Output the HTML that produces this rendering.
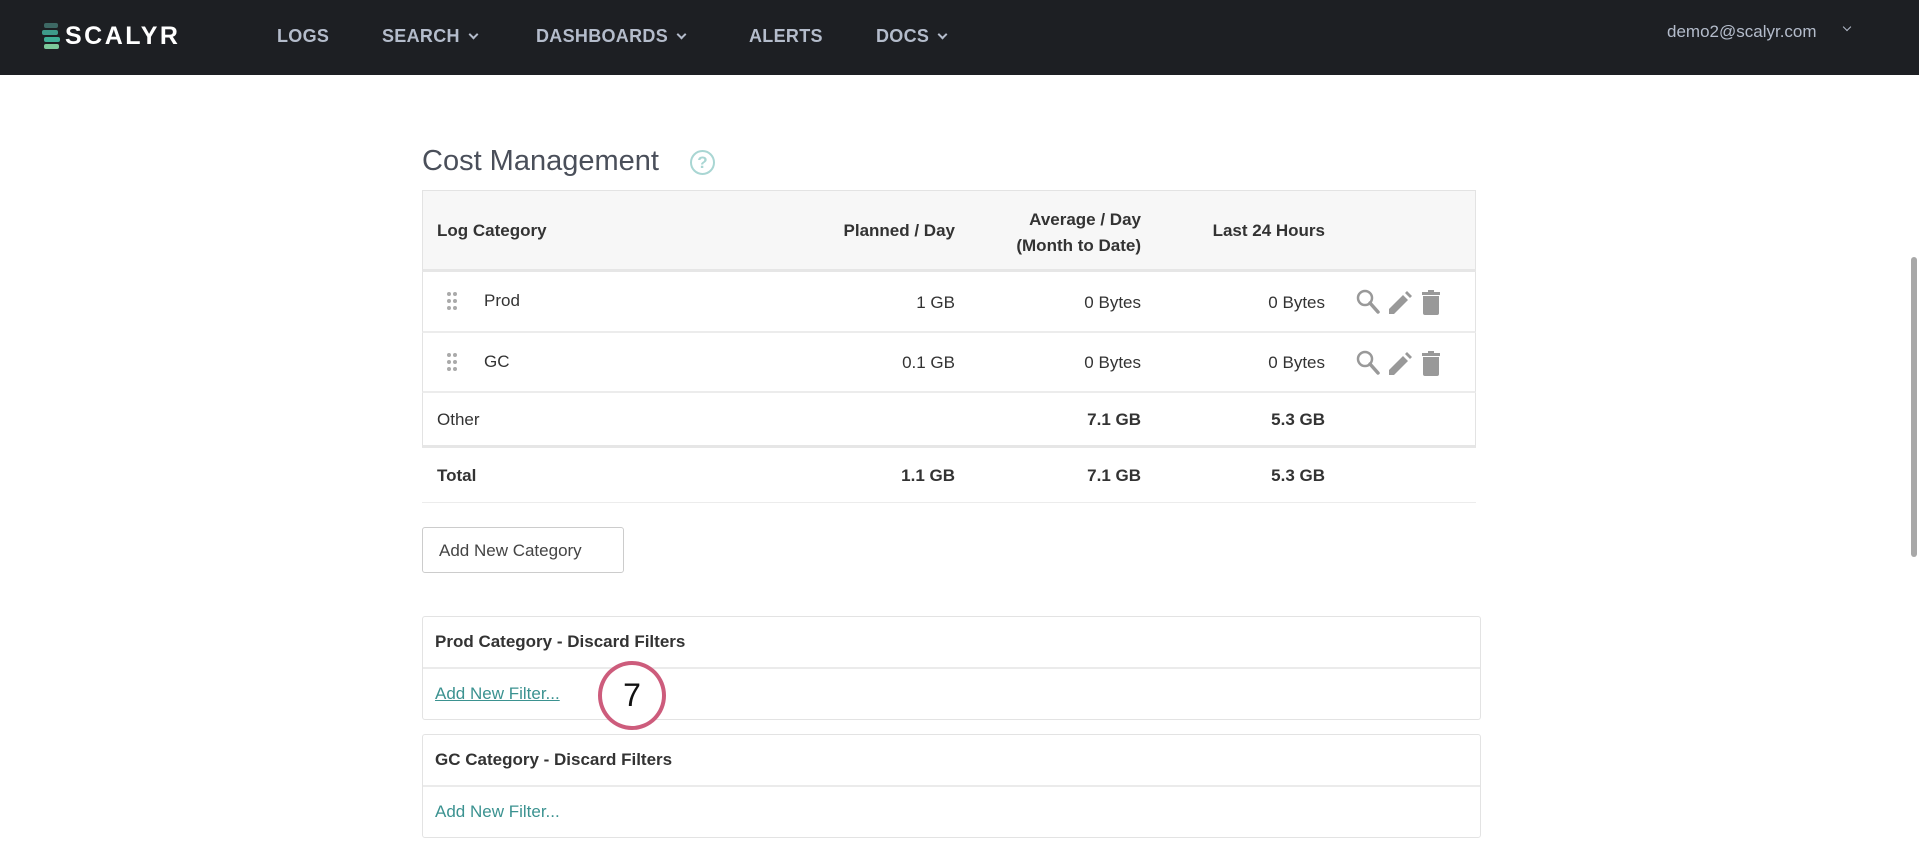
<!DOCTYPE html>
<html><head><meta charset="utf-8"><style>
*{box-sizing:border-box;margin:0;padding:0}
body{width:1919px;height:867px;overflow:hidden;background:#fff;font-family:"Liberation Sans",sans-serif;color:#333;position:relative}
.nav{position:absolute;left:0;top:0;width:1919px;height:75px;background:#1d1f23}
.nav .it{position:absolute;top:26px;color:#b4bccb;font-size:18px;font-weight:bold;letter-spacing:0.3px}
.chev{display:inline-block;width:7px;height:7px;border-right:2px solid #b4bccb;border-bottom:2px solid #b4bccb;transform:rotate(45deg);margin-left:10px;position:relative;top:-4px}
.abs{position:absolute}
.r{position:absolute;left:422px;width:1054px;border-left:1px solid #e3e3e3;border-right:1px solid #e3e3e3;font-size:17px}
.c{position:absolute;text-align:right}
.b{font-weight:bold}
.dots{position:absolute;left:24px;width:10px;height:20px}
.dots i{position:absolute;width:4px;height:4px;border-radius:50%;background:#aaa}
.panel{position:absolute;left:422px;width:1059px;border:1px solid #e3e3e3;border-radius:3px}
.panel .h{height:52px;border-bottom:2px solid #ebebeb;font-weight:bold;font-size:17px;padding:15px 12px}
.panel .l{padding:15px 12px;font-size:17px;color:#3b9290}
</style></head><body>
<div class="nav">
 <div class="abs" style="left:42px;top:23px">
  <div style="width:14px;height:5px;background:#3d6864;margin-left:2px;border-radius:2px"></div>
  <div style="width:16px;height:5px;background:#3e9a8a;margin-top:2px;border-radius:2px"></div>
  <div style="width:16px;height:5px;background:#3fae96;margin-top:2px;margin-left:2px;border-radius:2px"></div>
  <div style="width:15px;height:5px;background:#7cc99a;margin-top:2px;margin-left:2px;border-radius:2px"></div>
 </div>
 <div class="abs" style="left:65px;top:22px;color:#fff;font-weight:bold;font-size:25px;letter-spacing:2.5px">SCALYR</div>
 <div class="it" style="left:277px">LOGS</div>
 <div class="it" style="left:382px">SEARCH<span class="chev"></span></div>
 <div class="it" style="left:536px">DASHBOARDS<span class="chev"></span></div>
 <div class="it" style="left:749px">ALERTS</div>
 <div class="it" style="left:876px">DOCS<span class="chev"></span></div>
 <div class="abs" style="left:1667px;top:22px;color:#b4bccb;font-size:17px">demo2@scalyr.com</div>
 <div class="abs" style="left:1844px;top:24px;width:6px;height:6px;border-right:1.5px solid #b4bccb;border-bottom:1.5px solid #b4bccb;transform:rotate(45deg)"></div>
</div>
<div class="abs" style="left:1911px;top:257px;width:6px;height:300px;background:#a8a8a8;border-radius:3px"></div>

<div class="abs" style="left:422px;top:145px;font-size:29px;color:#4a4f5a">Cost Management</div>
<div class="abs" style="left:690px;top:150px;width:25px;height:25px;border:2px solid #a9d6d3;border-radius:50%;color:#a9d6d3;font-size:17px;text-align:center;line-height:21px;font-weight:bold">?</div>

<div class="r b" style="top:190px;height:82px;background:#f7f7f7;border-top:1px solid #e3e3e3;border-bottom:3px solid #e6e6e6">
 <div class="abs" style="left:14px;top:30px">Log Category</div>
 <div class="c" style="right:520px;top:30px">Planned / Day</div>
 <div class="c" style="right:334px;top:16px;line-height:26px">Average / Day<br>(Month to Date)</div>
 <div class="c" style="right:150px;top:30px">Last 24 Hours</div>
</div>
<div class="r" style="top:272px;height:61px;border-bottom:2px solid #ececec">
 <div class="dots" style="top:20px"><i style="left:0;top:0"></i><i style="left:6px;top:0"></i><i style="left:0;top:7px"></i><i style="left:6px;top:7px"></i><i style="left:0;top:14px"></i><i style="left:6px;top:14px"></i></div>
 <div class="abs" style="left:61px;top:19px">Prod</div>
 <div class="c" style="right:520px;top:21px">1 GB</div>
 <div class="c" style="right:334px;top:21px">0 Bytes</div>
 <div class="c" style="right:150px;top:21px">0 Bytes</div>
 <svg class="abs" style="left:933px;top:17px" width="96" height="28" viewBox="0 0 96 28"><circle cx="9" cy="9" r="7" fill="none" stroke="#999" stroke-width="2.5"/><line x1="14" y1="14" x2="22" y2="23" stroke="#999" stroke-width="3.5" stroke-linecap="round"/><path d="M33 25 L33 20 L47 6 L52 11 L38 25 Z M49 4 L51 2 L56 7 L54 9 Z" fill="#999"/><path d="M66 3 H84 V6 H66 Z M72 1 H78 V3 H72 Z M67 7 H83 V24 a2 2 0 0 1 -2 2 H69 a2 2 0 0 1 -2 -2 Z" fill="#999"/></svg>
</div>
<div class="r" style="top:333px;height:60px;border-bottom:2px solid #ececec">
 <div class="dots" style="top:20px"><i style="left:0;top:0"></i><i style="left:6px;top:0"></i><i style="left:0;top:7px"></i><i style="left:6px;top:7px"></i><i style="left:0;top:14px"></i><i style="left:6px;top:14px"></i></div>
 <div class="abs" style="left:61px;top:19px">GC</div>
 <div class="c" style="right:520px;top:20px">0.1 GB</div>
 <div class="c" style="right:334px;top:20px">0 Bytes</div>
 <div class="c" style="right:150px;top:20px">0 Bytes</div>
 <svg class="abs" style="left:933px;top:17px" width="96" height="28" viewBox="0 0 96 28"><circle cx="9" cy="9" r="7" fill="none" stroke="#999" stroke-width="2.5"/><line x1="14" y1="14" x2="22" y2="23" stroke="#999" stroke-width="3.5" stroke-linecap="round"/><path d="M33 25 L33 20 L47 6 L52 11 L38 25 Z M49 4 L51 2 L56 7 L54 9 Z" fill="#999"/><path d="M66 3 H84 V6 H66 Z M72 1 H78 V3 H72 Z M67 7 H83 V24 a2 2 0 0 1 -2 2 H69 a2 2 0 0 1 -2 -2 Z" fill="#999"/></svg>
</div>
<div class="r" style="top:393px;height:55px;border-bottom:3px solid #e6e6e6">
 <div class="abs" style="left:14px;top:17px">Other</div>
 <div class="c b" style="right:334px;top:17px">7.1 GB</div>
 <div class="c b" style="right:150px;top:17px">5.3 GB</div>
</div>
<div class="r b" style="top:448px;height:55px;border-left:none;border-right:none;border-bottom:1px solid #ececec">
 <div class="abs" style="left:15px;top:18px">Total</div>
 <div class="c" style="right:521px;top:18px">1.1 GB</div>
 <div class="c" style="right:335px;top:18px">7.1 GB</div>
 <div class="c" style="right:151px;top:18px">5.3 GB</div>
</div>

<div class="abs" style="left:422px;top:527px;width:202px;height:46px;border:1px solid #ccc;border-radius:3px;font-size:17px;padding:13px 16px;color:#444">Add New Category</div>

<div class="panel" style="top:616px;height:104px"><div class="h">Prod Category - Discard Filters</div><div class="l" style="text-decoration:underline">Add New Filter...</div></div>
<div class="panel" style="top:734px;height:104px"><div class="h">GC Category - Discard Filters</div><div class="l">Add New Filter...</div></div>
<div class="abs" style="left:598px;top:661px;width:68px;height:69px;border:4px solid #cd5c7c;border-radius:50%;background:#fff;text-align:center;font-size:32px;line-height:60px;color:#111">7</div>
</body></html>
